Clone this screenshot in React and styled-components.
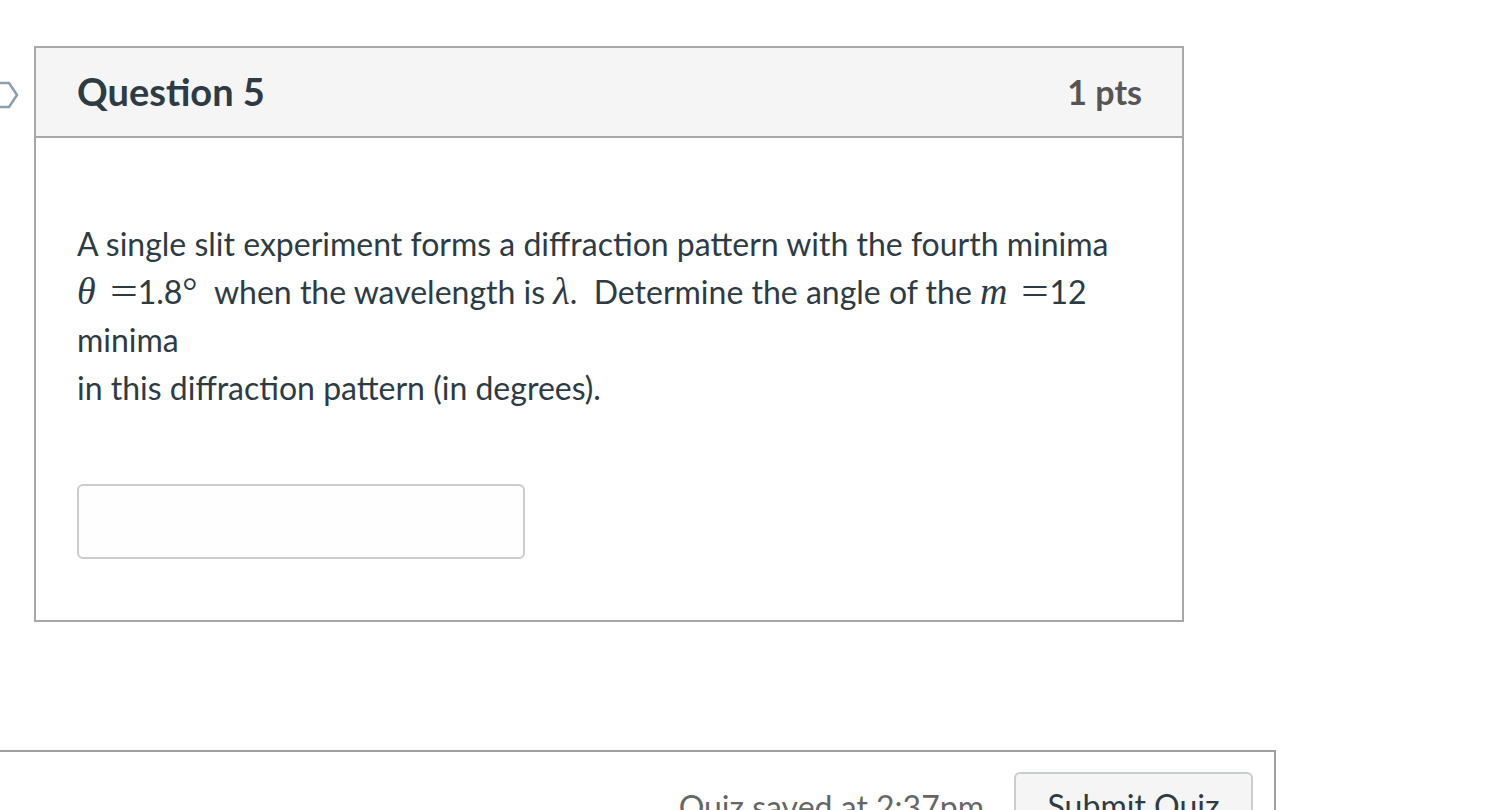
import React from "react";
import styled, { createGlobalStyle } from "styled-components";

const GlobalStyle = createGlobalStyle`
  html, body {
    margin: 0;
    padding: 0;
    background: #ffffff;
    font-family: Lato, "Open Sans", sans-serif;
    color: #2d3b45;
    overflow: hidden;
  }
`;

const App = () => {
  return (
    <>
      <GlobalStyle />
      <Page>
        <QuestionCard>
          <FlagIcon width="20" height="30" viewBox="0 0 20 30">
            <path d="M-12 3 L9 3 L17 15 L9 27 L-12 27" fill="none" stroke="#8c9fb0" strokeWidth="2.5" strokeLinejoin="round" />
          </FlagIcon>
          <CardHeader>
            <QuestionTitle>Question 5</QuestionTitle>
            <Points>1 pts</Points>
          </CardHeader>
          <CardBody>
            <QuestionText>
              A single slit experiment forms a diffraction pattern with the fourth minima
              <br />
              <MathVar>θ</MathVar><MathEq>=</MathEq>1.8<MathOp>°</MathOp>&nbsp; when the wavelength is <MathVar>λ</MathVar>.&nbsp; Determine the angle of the <MathVar>m</MathVar><MathEq>=</MathEq>12
              <br />
              minima
              <br />
              in this diffraction pattern (in degrees).
            </QuestionText>
            <AnswerInput type="text" />
          </CardBody>
        </QuestionCard>

        <FormActions>
          <SavedText>Quiz saved at 2:37pm</SavedText>
          <SubmitButton>Submit Quiz</SubmitButton>
        </FormActions>
      </Page>
    </>
  );
};

export default App;

//css Wrapper
const Page = styled.div`
  width: 1492px;
  height: 810px;
  padding-top: 46px;
  box-sizing: border-box;
  overflow: hidden;
`;

const QuestionCard = styled.div`
  position: relative;
  margin-left: 34px;
  width: 1150px;
  box-sizing: border-box;
  border: 2px solid #a8a8a8;
  background: #ffffff;
`;

const FlagIcon = styled.svg`
  position: absolute;
  left: -36px;
  top: 32px;
`;

const CardHeader = styled.div`
  display: flex;
  align-items: center;
  justify-content: space-between;
  padding: 0 40px 2px 41px;
  box-sizing: border-box;
  height: 90px;
  background: #f5f5f5;
  border-bottom: 2px solid #a8a8a8;
`;

const CardBody = styled.div`
  padding: 82px 41px 61px;
`;

const FormActions = styled.div`
  display: flex;
  align-items: flex-start;
  justify-content: flex-end;
  gap: 30px;
  margin-top: 128px;
  width: 1276px;
  box-sizing: border-box;
  padding: 20px 21px 0 0;
  height: 120px;
  border-top: 2px solid #a0a0a0;
  border-right: 2px solid #a0a0a0;
`;

//css Text
const QuestionTitle = styled.h2`
  margin: 0;
  font-family: Lato, sans-serif;
  font-size: 38px;
  font-weight: 700;
  color: #2d3b45;
`;

const Points = styled.span`
  font-family: Lato, sans-serif;
  font-size: 34px;
  font-weight: 700;
  color: #555555;
`;

const QuestionText = styled.p`
  margin: 0;
  font-family: Lato, sans-serif;
  font-size: 32px;
  line-height: 48px;
  color: #2d3b45;
`;

const MathVar = styled.span`
  font-family: "Liberation Serif", "DejaVu Serif", serif;
  font-style: italic;
  font-size: 38px;
  line-height: 0;
`;

const MathOp = styled.span`
  font-family: "Liberation Serif", "DejaVu Serif", serif;
  font-size: 38px;
  line-height: 0;
`;

const MathEq = styled.span`
  display: inline-block;
  width: 22px;
  margin: 0 6px 0 14px;
  font-family: "Liberation Serif", "DejaVu Serif", serif;
  font-size: 38px;
  line-height: 1;
  transform: scaleX(1.3);
  transform-origin: left center;
`;

const SavedText = styled.span`
  margin-top: 15px;
  font-family: Lato, sans-serif;
  font-size: 32px;
  color: #666666;
`;

//css input
const AnswerInput = styled.input`
  display: block;
  margin-top: 72px;
  width: 448px;
  height: 75px;
  box-sizing: border-box;
  border: 2px solid #cccccc;
  border-radius: 6px;
  outline: none;
  background: #fefefe;
`;

const SubmitButton = styled.button`
  width: 239px;
  padding: 13px 0 30px;
  box-sizing: border-box;
  font-family: Lato, sans-serif;
  font-size: 32px;
  line-height: 38px;
  color: #2d3b45;
  background: #f5f5f5;
  border: 2px solid #c7cdd1;
  border-radius: 6px;
  text-align: center;
`;
